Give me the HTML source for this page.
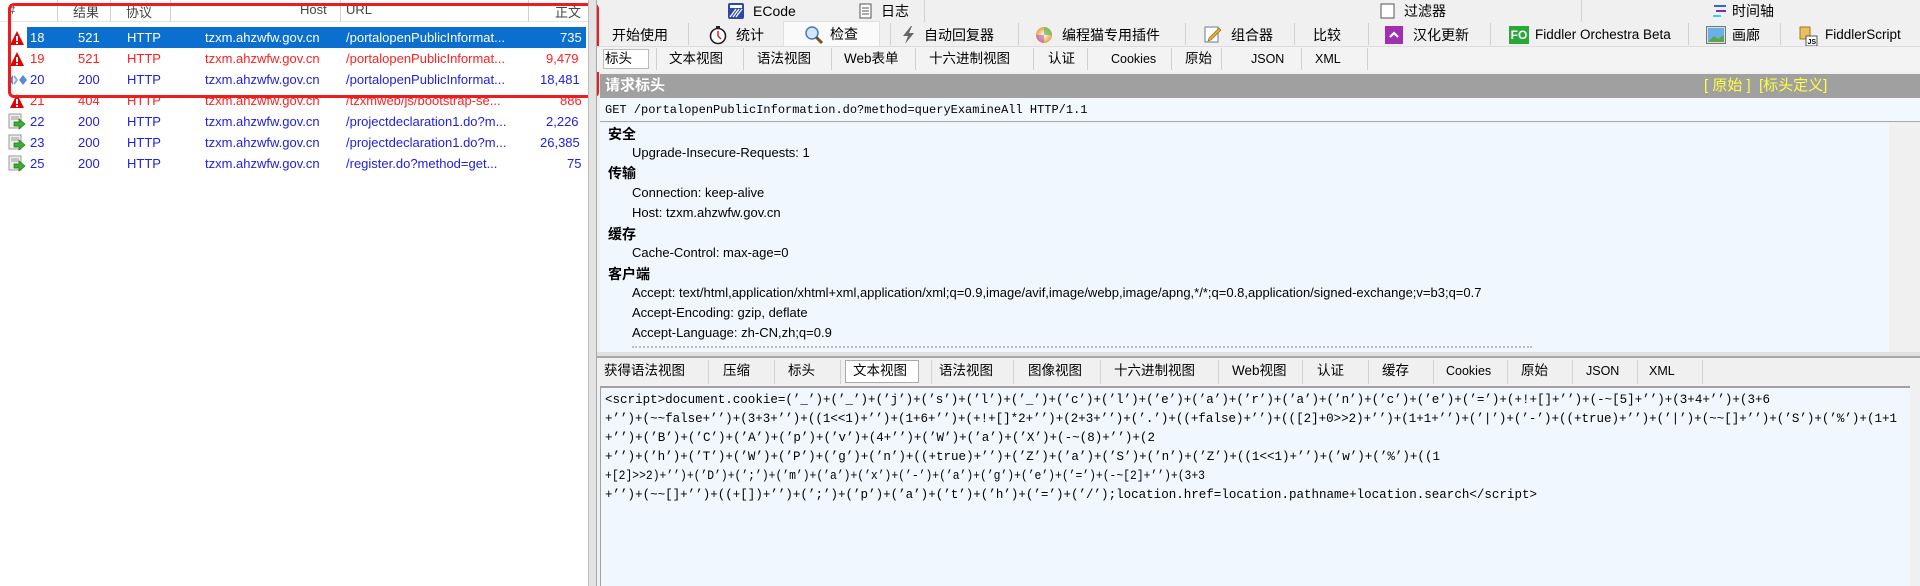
<!DOCTYPE html>
<html><head><meta charset="utf-8">
<style>
*{margin:0;padding:0;box-sizing:border-box}
body{width:1920px;height:586px;overflow:hidden;background:#f0f0f0;font-family:"Liberation Sans","Noto Sans CJK SC",sans-serif;font-size:13px;color:#000;position:relative}
.a{position:absolute;white-space:nowrap}
.lp{position:absolute;left:0;top:0;width:588px;height:586px;background:#fff}
.hd{position:absolute;left:0;top:0;width:588px;height:22px;background:#fff;border-bottom:1px solid #e5e5e5;color:#444}
.row{position:absolute;left:0;width:588px;height:21px;font-size:13px;line-height:21px}
.row span{position:absolute;top:0}
.red{color:#ff2020}.blu{color:#2020e0}
.sel{background:#0a6fcf;color:#fff}
.tab{position:absolute;line-height:22px;font-size:14px}
.vs{position:absolute;width:1px;background:#d0d0d0}
.st{position:absolute;font-size:13.5px;top:48px;line-height:22px}
.bt{position:absolute;font-size:13.5px;top:359px;line-height:24px}
.hl{position:absolute;left:632px;font-size:13px;line-height:20px}
.hb{position:absolute;left:608px;font-size:14px;font-weight:bold;line-height:20px}
</style></head><body>
<div class="lp">
  <div class="hd">
    <span class="a" style="left:8px;top:2px">#</span>
    <span class="a" style="left:73px;top:2px">结果</span>
    <span class="a" style="left:126px;top:2px">协议</span>
    <span class="a" style="left:300px;top:2px">Host</span>
    <span class="a" style="left:346px;top:2px">URL</span>
    <span class="a" style="left:555px;top:2px">正文</span>
    <div class="vs" style="left:57px;top:0;height:22px"></div>
    <div class="vs" style="left:110px;top:0;height:22px"></div>
    <div class="vs" style="left:170px;top:0;height:22px"></div>
    <div class="vs" style="left:340px;top:0;height:22px"></div>
    <div class="vs" style="left:528px;top:0;height:22px"></div>
  </div>
  <!-- rows -->
  <div class="row" style="top:27px"><div class="sel" style="position:absolute;left:27px;top:0;width:559px;height:21px"></div>
    <svg class="a" style="left:9px;top:3px" width="16" height="16"><path d="M8 1L15 15H1Z" fill="#e00000"/><rect x="7" y="6" width="2" height="5" fill="#fff"/><rect x="7" y="12" width="2" height="2" fill="#fff"/></svg>
    <span style="left:30px;color:#fff">18</span><span style="left:78px;color:#fff">521</span><span style="left:127px;color:#fff">HTTP</span><span style="left:205px;color:#fff">tzxm.ahzwfw.gov.cn</span><span style="left:346px;color:#fff">/portalopenPublicInformat...</span><span style="left:560px;color:#fff">735</span></div>
  <div class="row red" style="top:48px">
    <svg class="a" style="left:9px;top:3px" width="16" height="16"><path d="M8 1L15 15H1Z" fill="#e00000"/><rect x="7" y="6" width="2" height="5" fill="#fff"/><rect x="7" y="12" width="2" height="2" fill="#fff"/></svg>
    <span style="left:30px">19</span><span style="left:78px">521</span><span style="left:127px">HTTP</span><span style="left:205px">tzxm.ahzwfw.gov.cn</span><span style="left:346px">/portalopenPublicInformat...</span><span style="left:546px">9,479</span></div>
  <div class="row blu" style="top:69px">
    <svg class="a" style="left:8px;top:5px" width="20" height="12"><path d="M1 6L5 1L5 11Z M11 6L15 1L19 6L15 11Z" fill="#5a8ad8"/><path d="M6 2L9 6L6 10" stroke="#8ab0e8" fill="none" stroke-width="2"/></svg>
    <span style="left:30px">20</span><span style="left:78px">200</span><span style="left:127px">HTTP</span><span style="left:205px">tzxm.ahzwfw.gov.cn</span><span style="left:346px">/portalopenPublicInformat...</span><span style="left:540px">18,481</span></div>
  <div class="row red" style="top:90px">
    <svg class="a" style="left:9px;top:3px" width="16" height="16"><path d="M8 1L15 15H1Z" fill="#e00000"/><rect x="7" y="6" width="2" height="5" fill="#fff"/><rect x="7" y="12" width="2" height="2" fill="#fff"/></svg>
    <span style="left:30px">21</span><span style="left:78px">404</span><span style="left:127px">HTTP</span><span style="left:205px">tzxm.ahzwfw.gov.cn</span><span style="left:346px">/tzxmweb/js/bootstrap-se...</span><span style="left:560px">886</span></div>
  <div class="row blu" style="top:111px">
    <svg class="a" style="left:8px;top:2px" width="18" height="18"><rect x="1" y="1" width="12" height="14" fill="#eee" stroke="#999"/><path d="M3 4h8M3 6h8" stroke="#999"/><path d="M6 9h5V6l6 5-6 5v-3H6Z" fill="#3cb030" stroke="#207018" stroke-width=".7"/></svg>
    <span style="left:30px">22</span><span style="left:78px">200</span><span style="left:127px">HTTP</span><span style="left:205px">tzxm.ahzwfw.gov.cn</span><span style="left:346px">/projectdeclaration1.do?m...</span><span style="left:546px">2,226</span></div>
  <div class="row blu" style="top:132px">
    <svg class="a" style="left:8px;top:2px" width="18" height="18"><rect x="1" y="1" width="12" height="14" fill="#eee" stroke="#999"/><path d="M3 4h8M3 6h8" stroke="#999"/><path d="M6 9h5V6l6 5-6 5v-3H6Z" fill="#3cb030" stroke="#207018" stroke-width=".7"/></svg>
    <span style="left:30px">23</span><span style="left:78px">200</span><span style="left:127px">HTTP</span><span style="left:205px">tzxm.ahzwfw.gov.cn</span><span style="left:346px">/projectdeclaration1.do?m...</span><span style="left:540px">26,385</span></div>
  <div class="row blu" style="top:153px">
    <svg class="a" style="left:8px;top:2px" width="18" height="18"><rect x="1" y="1" width="12" height="14" fill="#eee" stroke="#999"/><path d="M3 4h8M3 6h8" stroke="#999"/><path d="M6 9h5V6l6 5-6 5v-3H6Z" fill="#3cb030" stroke="#207018" stroke-width=".7"/></svg>
    <span style="left:30px">25</span><span style="left:78px">200</span><span style="left:127px">HTTP</span><span style="left:205px">tzxm.ahzwfw.gov.cn</span><span style="left:346px">/register.do?method=get...</span><span style="left:567px">75</span></div>
</div>
<!-- red box -->
<div class="a" style="left:8px;top:3px;width:591px;height:95px;border:3px solid #ee1c1c;border-radius:6px"></div>
<!-- splitter -->
<div class="a" style="left:588px;top:0;width:9px;height:586px;background:#e3e3e3;border-left:1px solid #bdbdbd;border-right:1px solid #a8a8a8"></div>

<!-- top tab rows -->
<div class="vs" style="left:924px;top:0;height:22px"></div>
<div class="vs" style="left:1581px;top:0;height:22px"></div>
<svg class="a" style="left:727px;top:2px" width="18" height="18"><rect x="1" y="1" width="16" height="16" rx="2" fill="#2a4aa8"/><path d="M3 15L9 7M6 15L12 7M9 15L15 7" stroke="#fff" stroke-width="1.3"/><rect x="3" y="3" width="12" height="3" fill="#fff"/></svg>
<div class="tab" style="left:753px;top:0">ECode</div>
<svg class="a" style="left:859px;top:3px" width="14" height="16"><rect x="1" y="1" width="11" height="14" fill="#fff" stroke="#555"/><path d="M3 5h7M3 8h7M3 11h7" stroke="#555"/></svg>
<div class="tab" style="left:881px;top:0">日志</div>
<svg class="a" style="left:1380px;top:3px" width="16" height="16"><rect x="1" y="1" width="13" height="14" fill="#fff" stroke="#555"/></svg>
<div class="tab" style="left:1404px;top:0">过滤器</div>
<svg class="a" style="left:1712px;top:4px" width="16" height="14"><rect x="2" y="1" width="12" height="2" fill="#2a6ad8"/><rect x="4" y="6" width="10" height="2" fill="#8a2aa8"/><rect x="1" y="11" width="8" height="2" fill="#2ad8e8"/></svg>
<div class="tab" style="left:1732px;top:0">时间轴</div>

<div class="a" style="left:783px;top:21px;width:97px;height:26px;background:#fafafa;border:1px solid #e0e0e0;border-bottom:none"></div>
<div class="vs" style="left:688px;top:23px;height:22px"></div>
<div class="vs" style="left:890px;top:23px;height:22px"></div>
<div class="vs" style="left:1018px;top:23px;height:22px"></div>
<div class="vs" style="left:1185px;top:23px;height:22px"></div>
<div class="vs" style="left:1294px;top:23px;height:22px"></div>
<div class="vs" style="left:1368px;top:23px;height:22px"></div>
<div class="vs" style="left:1490px;top:23px;height:22px"></div>
<div class="vs" style="left:1688px;top:23px;height:22px"></div>
<div class="vs" style="left:1780px;top:23px;height:22px"></div>
<div class="tab" style="left:612px;top:24px">开始使用</div>
<svg class="a" style="left:708px;top:25px" width="20" height="20"><circle cx="10" cy="11" r="7.5" fill="#fff" stroke="#222" stroke-width="1.6"/><path d="M10 11V6M10 11l3 3" stroke="#d22" stroke-width="1.5"/><rect x="8" y="1" width="4" height="2" fill="#222"/></svg>
<div class="tab" style="left:736px;top:24px">统计</div>
<svg class="a" style="left:803px;top:24px" width="22" height="22"><circle cx="9" cy="9" r="6" fill="#cfe8ff" stroke="#4a7ab8" stroke-width="1.5"/><path d="M13 13l6 6" stroke="#7a5020" stroke-width="3"/></svg>
<div class="tab" style="left:830px;top:23px">检查</div>
<svg class="a" style="left:900px;top:25px" width="16" height="20"><path d="M11 1L3 11h5l-3 8 9-11H9l3-7Z" fill="#666"/></svg>
<div class="tab" style="left:924px;top:24px">自动回复器</div>
<svg class="a" style="left:1035px;top:26px" width="18" height="18"><defs><radialGradient id="g1"><stop offset="0" stop-color="#fff"/><stop offset="1" stop-color="#e8a040"/></radialGradient></defs><circle cx="9" cy="9" r="8" fill="url(#g1)"/><path d="M9 1a8 8 0 0 1 8 8H9Z" fill="#60c060" opacity=".7"/><path d="M1 9a8 8 0 0 0 8 8V9Z" fill="#c060c0" opacity=".6"/></svg>
<div class="tab" style="left:1062px;top:24px">编程猫专用插件</div>
<svg class="a" style="left:1204px;top:25px" width="18" height="18"><rect x="1" y="2" width="13" height="15" fill="#fff" stroke="#6a7a9a"/><path d="M5 13L15 3l2 2L7 15l-3 1Z" fill="#e8b030" stroke="#8a6010" stroke-width=".6"/></svg>
<div class="tab" style="left:1231px;top:24px">组合器</div>
<div class="tab" style="left:1313px;top:24px">比较</div>
<svg class="a" style="left:1385px;top:26px" width="18" height="18"><rect width="18" height="18" fill="#a030b0"/><path d="M5 11l4-4 4 4" stroke="#fff" stroke-width="2.2" fill="none"/></svg>
<div class="tab" style="left:1413px;top:24px">汉化更新</div>
<div class="a" style="left:1509px;top:26px;width:20px;height:18px;background:#28a838;color:#fff;font-size:12px;font-weight:bold;line-height:18px;text-align:center">FO</div>
<div class="tab" style="left:1535px;top:24px;font-size:13.5px">Fiddler Orchestra Beta</div>
<svg class="a" style="left:1706px;top:26px" width="20" height="18"><rect x=".5" y=".5" width="19" height="17" fill="#ddd" stroke="#777"/><rect x="2" y="2" width="16" height="14" fill="#6ab0e8"/><path d="M2 16l6-6 4 3 6-4v7Z" fill="#58a848"/></svg>
<div class="tab" style="left:1732px;top:24px">画廊</div>
<svg class="a" style="left:1797px;top:25px" width="22" height="22"><path d="M3 2h10v12H3Z" fill="#e8c060" stroke="#a07820"/><rect x="9" y="11" width="11" height="10" fill="#fff" stroke="#555"/><text x="10.5" y="19" font-size="7" font-family="Liberation Sans" font-weight="bold">JS</text></svg>
<div class="tab" style="left:1825px;top:24px;font-size:13.5px">FiddlerScript</div>

<!-- sub tabs -->
<div class="a" style="left:597px;top:46px;width:1323px;height:26px;background:#f3f3f3;border-top:1px solid #ddd"></div>
<div class="a" style="left:603px;top:49px;width:46px;height:20px;background:#fff;border:1px solid #bbb"></div>
<div class="st" style="left:605px">标头</div>
<div class="vs" style="left:656px;top:48px;height:22px"></div>
<div class="st" style="left:669px">文本视图</div>
<div class="vs" style="left:743px;top:48px;height:22px"></div>
<div class="st" style="left:757px">语法视图</div>
<div class="vs" style="left:831px;top:48px;height:22px"></div>
<div class="st" style="left:844px">Web表单</div>
<div class="vs" style="left:915px;top:48px;height:22px"></div>
<div class="st" style="left:929px">十六进制视图</div>
<div class="vs" style="left:1033px;top:48px;height:22px"></div>
<div class="st" style="left:1048px">认证</div>
<div class="vs" style="left:1087px;top:48px;height:22px"></div>
<div class="st" style="left:1111px;font-size:12.5px">Cookies</div>
<div class="vs" style="left:1171px;top:48px;height:22px"></div>
<div class="st" style="left:1185px">原始</div>
<div class="vs" style="left:1221px;top:48px;height:22px"></div>
<div class="st" style="left:1251px;font-size:12.5px">JSON</div>
<div class="vs" style="left:1301px;top:48px;height:22px"></div>
<div class="st" style="left:1315px;font-size:12.5px">XML</div>
<div class="vs" style="left:1367px;top:48px;height:22px"></div>

<!-- header panel -->
<div class="a" style="left:600px;top:74px;width:1320px;height:24px;background:#a0a0a0"></div>
<div class="a" style="left:605px;top:75px;color:#fff;font-weight:bold;font-size:15px;line-height:22px">请求标头</div>
<div class="a" style="left:1704px;top:75px;color:#ffff40;font-size:15px;line-height:22px">[ 原始 ]&nbsp; [标头定义]</div>
<div class="a" style="left:600px;top:98px;width:1320px;height:24px;background:#f2f8ff;border-bottom:1px solid #aaa"></div>
<div class="a" style="left:605px;top:100px;font-family:'Liberation Mono',monospace;font-size:12px;line-height:20px">GET /portalopenPublicInformation.do?method=queryExamineAll HTTP/1.1</div>
<div class="a" style="left:600px;top:123px;width:1289px;height:229px;background:#f0f7ff"></div>
<div class="a" style="left:1889px;top:123px;width:31px;height:229px;background:#f0f0f0"></div>
<div class="hb" style="top:124px">安全</div>
<div class="hl" style="top:143px">Upgrade-Insecure-Requests: 1</div>
<div class="hb" style="top:163px">传输</div>
<div class="hl" style="top:183px">Connection: keep-alive</div>
<div class="hl" style="top:203px">Host: tzxm.ahzwfw.gov.cn</div>
<div class="hb" style="top:224px">缓存</div>
<div class="hl" style="top:243px">Cache-Control: max-age=0</div>
<div class="hb" style="top:264px">客户端</div>
<div class="hl" style="top:283px">Accept: text/html,application/xhtml+xml,application/xml;q=0.9,image/avif,image/webp,image/apng,*/*;q=0.8,application/signed-exchange;v=b3;q=0.7</div>
<div class="hl" style="top:303px">Accept-Encoding: gzip, deflate</div>
<div class="hl" style="top:323px">Accept-Language: zh-CN,zh;q=0.9</div>
<div class="a" style="left:632px;top:346px;width:900px;height:4px;border-top:2px dotted #888;opacity:.5"></div>

<!-- splitter horizontal -->
<div class="a" style="left:597px;top:352px;width:1323px;height:6px;background:#e0e0e0;border-bottom:2px solid #a8a8a8"></div>

<!-- bottom tabs -->
<div class="a" style="left:845px;top:360px;width:74px;height:23px;background:#fff;border:1px solid #aaa"></div>
<div class="bt" style="left:604px">获得语法视图</div>
<div class="vs" style="left:708px;top:360px;height:24px"></div>
<div class="bt" style="left:723px">压缩</div>
<div class="vs" style="left:774px;top:360px;height:24px"></div>
<div class="bt" style="left:788px">标头</div>
<div class="vs" style="left:840px;top:360px;height:24px"></div>
<div class="bt" style="left:853px">文本视图</div>
<div class="vs" style="left:931px;top:360px;height:24px"></div>
<div class="bt" style="left:939px">语法视图</div>
<div class="vs" style="left:1013px;top:360px;height:24px"></div>
<div class="bt" style="left:1028px">图像视图</div>
<div class="vs" style="left:1100px;top:360px;height:24px"></div>
<div class="bt" style="left:1114px">十六进制视图</div>
<div class="vs" style="left:1218px;top:360px;height:24px"></div>
<div class="bt" style="left:1232px">Web视图</div>
<div class="vs" style="left:1302px;top:360px;height:24px"></div>
<div class="bt" style="left:1317px">认证</div>
<div class="vs" style="left:1368px;top:360px;height:24px"></div>
<div class="bt" style="left:1382px">缓存</div>
<div class="vs" style="left:1433px;top:360px;height:24px"></div>
<div class="bt" style="left:1446px;font-size:12.5px">Cookies</div>
<div class="vs" style="left:1507px;top:360px;height:24px"></div>
<div class="bt" style="left:1521px">原始</div>
<div class="vs" style="left:1572px;top:360px;height:24px"></div>
<div class="bt" style="left:1586px;font-size:12.5px">JSON</div>
<div class="vs" style="left:1637px;top:360px;height:24px"></div>
<div class="bt" style="left:1649px;font-size:12.5px">XML</div>
<div class="vs" style="left:1702px;top:360px;height:24px"></div>

<!-- code area -->
<div class="a" style="left:600px;top:386px;width:1310px;height:200px;background:#f0f7ff;border-top:2px solid #a0a0a0;border-left:1px solid #a0a0a0"></div>
<svg class="a" style="left:0;top:0" width="1920" height="586" font-family="'Liberation Mono',monospace" font-size="12.5" fill="#000">
<text x="605" y="403" textLength="1165" lengthAdjust="spacingAndGlyphs">&lt;script&gt;document.cookie=(’_’)+(’_’)+(’j’)+(’s’)+(’l’)+(’_’)+(’c’)+(’l’)+(’e’)+(’a’)+(’r’)+(’a’)+(’n’)+(’c’)+(’e’)+(’=’)+(+!+[]+’’)+(-~[5]+’’)+(3+4+’’)+(3+6</text>
<text x="605" y="422" textLength="1292" lengthAdjust="spacingAndGlyphs">+’’)+(~~false+’’)+(3+3+’’)+((1&lt;&lt;1)+’’)+(1+6+’’)+(+!+[]*2+’’)+(2+3+’’)+(’.’)+((+false)+’’)+(([2]+0&gt;&gt;2)+’’)+(1+1+’’)+(’|’)+(’-’)+((+true)+’’)+(’|’)+(~~[]+’’)+(’S’)+(’%’)+(1+1</text>
<text x="605" y="441" textLength="550" lengthAdjust="spacingAndGlyphs">+’’)+(’B’)+(’C’)+(’A’)+(’p’)+(’v’)+(4+’’)+(’W’)+(’a’)+(’X’)+(-~(8)+’’)+(2</text>
<text x="605" y="460" textLength="835" lengthAdjust="spacingAndGlyphs">+’’)+(’h’)+(’T’)+(’W’)+(’P’)+(’g’)+(’n’)+((+true)+’’)+(’Z’)+(’a’)+(’S’)+(’n’)+(’Z’)+((1&lt;&lt;1)+’’)+(’w’)+(’%’)+((1</text>
<text x="605" y="479" textLength="600" lengthAdjust="spacingAndGlyphs">+[2]&gt;&gt;2)+’’)+(’D’)+(’;’)+(’m’)+(’a’)+(’x’)+(’-’)+(’a’)+(’g’)+(’e’)+(’=’)+(-~[2]+’’)+(3+3</text>
<text x="605" y="498" textLength="932" lengthAdjust="spacingAndGlyphs">+’’)+(~~[]+’’)+((+[])+’’)+(’;’)+(’p’)+(’a’)+(’t’)+(’h’)+(’=’)+(’/’);location.href=location.pathname+location.search&lt;/script&gt;</text>
</svg>
</body></html>
